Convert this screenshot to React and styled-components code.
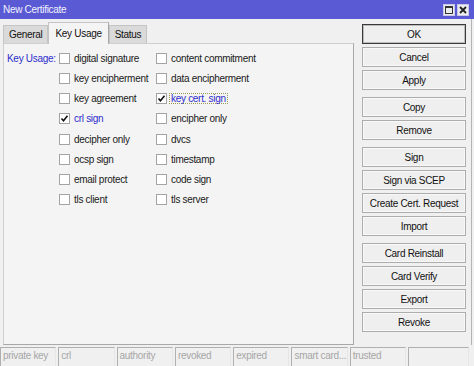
import React from 'react';
import styled, { createGlobalStyle } from 'styled-components';

const GlobalStyle = createGlobalStyle`
  * { box-sizing: border-box; }
  body {
    margin: 0;
    background: #f0f0f0;
    font-family: "Liberation Sans", Arial, sans-serif;
    font-size: 10px;
    letter-spacing: -0.3px;
    color: #1a1a1a;
  }
`;

const Window = styled.div`
  width: 474px;
  height: 366px;
  overflow: hidden;
  display: flex;
  flex-direction: column;
  background: #f0f0f0;
`;

const TitleBar = styled.div`
  height: 19px;
  flex: none;
  display: flex;
  align-items: center;
  justify-content: space-between;
  padding: 0 5px 0 3px;
  background: #5a5ad4;
  color: #f2f2ff;
`;

const TitleButtons = styled.div`
  display: flex;
  gap: 2px;
`;

const TitleButton = styled.div`
  width: 12px;
  height: 12px;
  background: #ececec;
  border: 1px solid #c8c8e8;
  display: flex;
  align-items: center;
  justify-content: center;
`;

const Body = styled.div`
  height: 326px;
  flex: none;
  display: flex;
  padding-left: 3px;
  border-right: 1px solid #b4b4b4;
  width: 472px;
`;

const LeftPane = styled.div`
  width: 351px;
  display: flex;
  flex-direction: column;
  padding-top: 3px;
`;

const TabStrip = styled.div`
  height: 21px;
  display: flex;
  align-items: flex-end;
`;

const Tab = styled.div`
  height: ${p => (p.$active ? '22px' : '18px')};
  padding: 0 ${p => (p.$active ? '6px' : '5px')};
  display: flex;
  align-items: center;
  background: ${p => (p.$active ? '#f4f4f4' : '#dadada')};
  border: 1px solid #c4c4c4;
  border-bottom: none;
  margin-bottom: ${p => (p.$active ? '-1px' : '0')};
  position: relative;
  z-index: ${p => (p.$active ? 1 : 0)};
  border-right-color: ${p => (p.$active ? '#a8a8a8' : '#c4c4c4')};
  color: #111;
`;

const Panel = styled.div`
  flex: 1;
  background: #f4f4f4;
  border: 1px solid #cfcfcf;
  border-right-color: #a8a8a8;
  border-bottom-color: #a8a8a8;
  padding: 4px 0 0 3px;
`;

const UsageGrid = styled.div`
  display: grid;
  grid-template-columns: 52px 97px 1fr;
  grid-auto-rows: 20.25px;
  align-items: center;
`;

const FieldLabel = styled.div`
  color: #2d2dcc;
`;

const CheckRow = styled.div`
  display: flex;
  align-items: center;
  color: ${p => (p.$checked ? '#2d2dcc' : '#1a1a1a')};
`;

const Box = styled.div`
  width: 11px;
  height: 11px;
  flex: none;
  margin-right: 3px;
  background: #ffffff;
  border: 1px solid #a4a4a4;
  display: flex;
  align-items: center;
  justify-content: center;
`;

const CheckText = styled.span`
  padding: 0 1px;
  margin-left: -1px;
  border: 1px ${p => (p.$focused ? 'dotted #9a9a50' : 'solid transparent')};
  line-height: 9px;
  height: 11px;
`;

const RightPane = styled.div`
  width: 104px;
  margin-left: 8px;
  padding-top: 5px;
  display: flex;
  flex-direction: column;
  gap: 3px;
`;

const Button = styled.div`
  height: 20px;
  flex: none;
  display: flex;
  align-items: center;
  justify-content: center;
  background: #efefef;
  border: 1px solid ${p => (p.$default ? '#3a3a3a' : '#adadad')};
  box-shadow: inset 0 0 0 1px ${p => (p.$default ? '#bcbcbc' : '#f8f8f8')};
  margin-top: ${p => (p.$group ? '4px' : '0')};
  color: #111;
`;

const StatusBar = styled.div`
  margin-top: 2px;
  display: flex;
  gap: 2px;
  width: 470px;
`;

const StatusCell = styled.div`
  width: ${p => (p.$wide ? '61px' : '56.3px')};
  height: 22px;
  flex: none;
  padding: 2px 0 0 2px;
  color: #a6a6a6;
  border: 1px solid #e6e6e6;
  border-top-color: #b0b0b0;
  border-left-color: #b0b0b0;
  white-space: nowrap;
  overflow: hidden;
`;

const Check = () => (
  <svg width="9" height="9" viewBox="0 0 9 9">
    <path d="M1.5 4.5 L3.5 6.8 L7.5 1.8" fill="none" stroke="#111" strokeWidth="1.6" />
  </svg>
);

const left = [
  ['digital signature'],
  ['key encipherment'],
  ['key agreement'],
  ['crl sign', true],
  ['decipher only'],
  ['ocsp sign'],
  ['email protect'],
  ['tls client'],
];

const right = [
  ['content commitment'],
  ['data encipherment'],
  ['key cert. sign', true, true],
  ['encipher only'],
  ['dvcs'],
  ['timestamp'],
  ['code sign'],
  ['tls server'],
];

const buttons = [
  ['OK', false, true],
  ['Cancel'],
  ['Apply'],
  ['Copy', true],
  ['Remove'],
  ['Sign', true],
  ['Sign via SCEP'],
  ['Create Cert. Request'],
  ['Import'],
  ['Card Reinstall', true],
  ['Card Verify'],
  ['Export'],
  ['Revoke'],
];

const status = ['private key', 'crl', 'authority', 'revoked', 'expired', 'smart card...', 'trusted'];

const CheckItem = ({ text, checked, focused }) => (
  <CheckRow $checked={checked}>
    <Box>{checked && <Check />}</Box>
    <CheckText $focused={focused}>{text}</CheckText>
  </CheckRow>
);

export default function App() {
  return (
    <Window>
      <GlobalStyle />
      <TitleBar>
        <span>New Certificate</span>
        <TitleButtons>
          <TitleButton>
            <svg width="8" height="8" viewBox="0 0 8 8">
              <rect x="0.5" y="0.5" width="7" height="7" fill="none" stroke="#333" />
              <rect x="0" y="0" width="8" height="2" fill="#333" />
            </svg>
          </TitleButton>
          <TitleButton>
            <svg width="8" height="8" viewBox="0 0 8 8">
              <path d="M1 1 L7 7 M7 1 L1 7" stroke="#222" strokeWidth="1.8" />
            </svg>
          </TitleButton>
        </TitleButtons>
      </TitleBar>
      <Body>
        <LeftPane>
          <TabStrip>
            <Tab>General</Tab>
            <Tab $active>Key Usage</Tab>
            <Tab>Status</Tab>
          </TabStrip>
          <Panel>
            <UsageGrid>
              {left.map(([t, c], i) => (
                <React.Fragment key={t}>
                  {i === 0 ? <FieldLabel>Key Usage:</FieldLabel> : <span />}
                  <CheckItem text={t} checked={c} />
                  <CheckItem text={right[i][0]} checked={right[i][1]} focused={right[i][2]} />
                </React.Fragment>
              ))}
            </UsageGrid>
          </Panel>
        </LeftPane>
        <RightPane>
          {buttons.map(([t, g, d]) => (
            <Button key={t} $group={g} $default={d}>{t}</Button>
          ))}
        </RightPane>
      </Body>
      <StatusBar>
        {status.map(s => (
          <StatusCell key={s}>{s}</StatusCell>
        ))}
        <StatusCell $wide />
      </StatusBar>
    </Window>
  );
}
